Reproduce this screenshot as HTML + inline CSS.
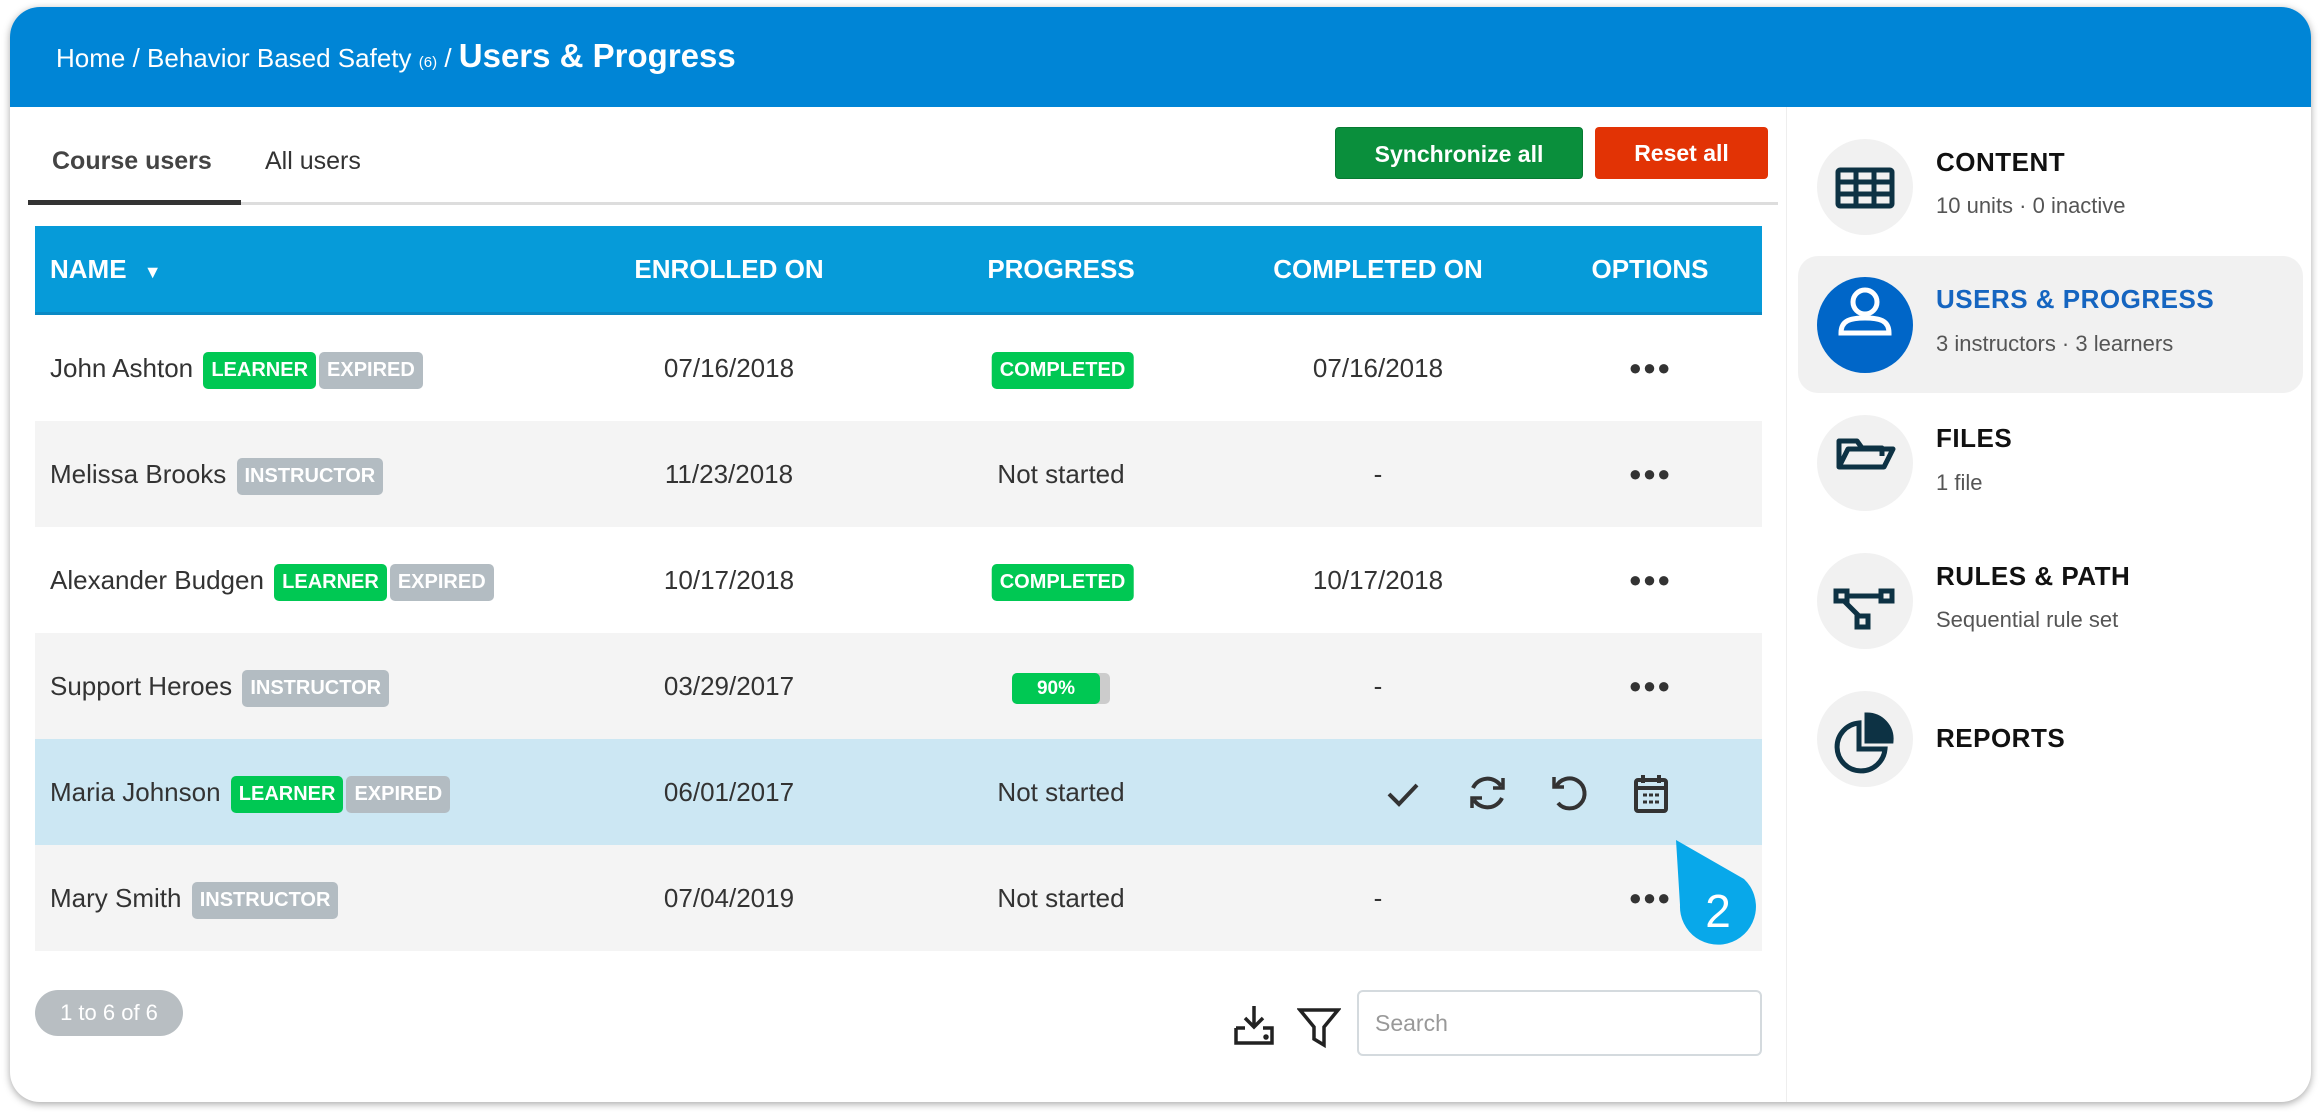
<!DOCTYPE html>
<html><head><meta charset="utf-8"><style>
*{box-sizing:border-box;margin:0;padding:0}
body{width:2320px;height:1112px;background:#fff;font-family:"Liberation Sans",sans-serif;position:relative;overflow:hidden;color:#333}
.card{position:absolute;left:10px;top:7px;width:2301px;height:1095px;border-radius:30px;background:#fff;box-shadow:0 2px 8px rgba(0,0,0,.35);overflow:hidden}
.hdr{position:absolute;left:0;top:0;width:100%;height:100px;background:#0085d6;color:#fff}
.a{position:absolute}
.bc{left:46px;top:30px;font-size:26px;white-space:nowrap}
.bc b{font-size:33px}
.tab{top:140px;font-size:25px}
.btn{top:120px;height:52px;border-radius:4px;color:#fff;font-weight:bold;font-size:23px;text-align:center;line-height:52px}
.th{position:absolute;left:25px;top:219px;width:1727px;height:89px;background:#069bd9;border-bottom:3px solid #0a89c4;color:#fff;font-size:26px;font-weight:bold}
.row{position:absolute;left:25px;width:1727px;height:106px;font-size:26px}
.c{position:absolute;top:0;height:106px;line-height:106px;text-align:center;transform:translateX(-50%);white-space:nowrap}
.nm{position:absolute;left:15px;top:0;line-height:106px;white-space:nowrap}
.bd{display:inline-block;height:37px;line-height:37px;padding:0 8px;border-radius:5px;color:#fff;font-weight:bold;font-size:20px;vertical-align:middle;margin-left:3px}
.l{background:#00c853}.e{background:#b3bcc2}
.dots{font-size:22px;font-weight:bold;letter-spacing:1px}
.side .ci{position:absolute;left:1807px;width:96px;height:96px;border-radius:50%;background:#f1f1f1}
.side .t{position:absolute;left:1926px;font-size:26px;font-weight:bold;color:#111;letter-spacing:.5px}
.side .s{position:absolute;left:1926px;font-size:22px;color:#555}
</style></head><body>
<div class="card">
<div class="hdr"><div class="a bc">Home / Behavior Based Safety <span style="font-size:15px">(6)</span> / <b>Users &amp; Progress</b></div></div>
<div class="a" style="left:1776px;top:100px;width:1px;height:1000px;background:#eee"></div>
<div class="a tab" style="left:42px;font-weight:bold;color:#444">Course users</div>
<div class="a tab" style="left:255px;color:#333">All users</div>
<div class="a" style="left:18px;top:195px;width:1750px;height:3px;background:#ddd"></div>
<div class="a" style="left:18px;top:193px;width:213px;height:5px;background:#333"></div>
<div class="a btn" style="left:1325px;width:248px;background:#0a8f3c;border:1px solid #077a32">Synchronize all</div>
<div class="a btn" style="left:1585px;width:173px;background:#e23305">Reset all</div>
<div class="th">
<div class="a" style="left:15px;top:28px">NAME <span style="font-size:18px;margin-left:10px">▼</span></div>
<div class="c" style="left:694px;line-height:86px">ENROLLED ON</div>
<div class="c" style="left:1026px;line-height:86px">PROGRESS</div>
<div class="c" style="left:1343px;line-height:86px">COMPLETED ON</div>
<div class="c" style="left:1615px;line-height:86px">OPTIONS</div>
</div>
<div class="row" style="top:308px;background:#fff"><div class="nm">John Ashton <span class="bd l">LEARNER</span><span class="bd e">EXPIRED</span></div><div class="c" style="left:694px">07/16/2018</div><div class="c" style="left:1026px"><span class="bd l">COMPLETED</span></div><div class="c" style="left:1343px">07/16/2018</div><div class="c dots" style="left:1615px">●●●</div></div>
<div class="row" style="top:414px;background:#f4f4f4"><div class="nm">Melissa Brooks <span class="bd e">INSTRUCTOR</span></div><div class="c" style="left:694px">11/23/2018</div><div class="c" style="left:1026px">Not started</div><div class="c" style="left:1343px">-</div><div class="c dots" style="left:1615px">●●●</div></div>
<div class="row" style="top:520px;background:#fff"><div class="nm">Alexander Budgen <span class="bd l">LEARNER</span><span class="bd e">EXPIRED</span></div><div class="c" style="left:694px">10/17/2018</div><div class="c" style="left:1026px"><span class="bd l">COMPLETED</span></div><div class="c" style="left:1343px">10/17/2018</div><div class="c dots" style="left:1615px">●●●</div></div>
<div class="row" style="top:626px;background:#f4f4f4"><div class="nm">Support Heroes <span class="bd e">INSTRUCTOR</span></div><div class="c" style="left:694px">03/29/2017</div><div class="c" style="left:1026px"><span style="display:inline-block;vertical-align:middle;width:98px;height:31px;background:#ccc;border-radius:5px;position:relative"><span style="position:absolute;left:0;top:0;width:88px;height:31px;background:#00c853;border-radius:5px;color:#fff;font-weight:bold;font-size:19px;line-height:31px;text-align:center">90%</span></span></div><div class="c" style="left:1343px">-</div><div class="c dots" style="left:1615px">●●●</div></div>
<div class="row" style="top:732px;background:#cce7f3"><div class="nm">Maria Johnson <span class="bd l">LEARNER</span><span class="bd e">EXPIRED</span></div><div class="c" style="left:694px">06/01/2017</div><div class="c" style="left:1026px">Not started</div>
<svg class="a" style="left:1340px;top:33px" width="300" height="42" viewBox="0 0 300 42" fill="none" stroke="#333" stroke-width="4">
<path d="M14 22l10 10 18-19"/>
<path d="M98 16a16 16 0 0 1 28-2M127 26a16 16 0 0 1-28 2"/><path d="M128 6v10h-10M97 36V26h10" stroke-width="3.5"/>
<path d="M181 15a15 15 0 1 1 2 16"/><path d="M179 5v10h10" stroke-width="3.5"/>
<rect x="261" y="8" width="30" height="31" rx="2"/><path d="M261 16h30M268 3v8M284 3v8"/><path d="M268 23h4M274 23h4M280 23h4M268 30h4M274 30h4M280 30h4" stroke-width="3"/>
</svg></div>
<div class="row" style="top:838px;background:#f4f4f4"><div class="nm">Mary Smith <span class="bd e">INSTRUCTOR</span></div><div class="c" style="left:694px">07/04/2019</div><div class="c" style="left:1026px">Not started</div><div class="c" style="left:1343px">-</div><div class="c dots" style="left:1615px">●●●</div></div>
<svg class="a" style="left:1630px;top:820px" width="130" height="120" viewBox="0 0 130 120"><path d="M36 13 L104 52 A38 38 0 1 1 40 78 Z" fill="#08a8ea"/><text x="78" y="100" fill="#fff" font-size="46" font-family="Liberation Sans" text-anchor="middle">2</text></svg>
<div class="a" style="left:25px;top:983px;width:148px;height:46px;border-radius:23px;background:#b8bec2;color:#fff;font-size:22px;line-height:46px;text-align:center">1 to 6 of 6</div>
<svg class="a" style="left:1222px;top:996px" width="44" height="44" viewBox="0 0 44 44" fill="none" stroke="#222" stroke-width="3.5">
<path d="M22 3v20M13 15l9 9 9-9M4 25v15h36V25H31M13 25H4"/><circle cx="34" cy="34" r="1" fill="#222"/></svg>
<svg class="a" style="left:1287px;top:998px" width="44" height="44" viewBox="0 0 44 44" fill="none" stroke="#222" stroke-width="3.5">
<path d="M3 5h38L27 22v18l-10-6V22z"/></svg>
<div class="a" style="left:1347px;top:983px;width:405px;height:66px;border:2px solid #d4dade;border-radius:6px;font-size:23px;color:#999;line-height:62px;padding-left:16px">Search</div>
<div class="side">
<div class="a" style="left:1788px;top:249px;width:505px;height:137px;border-radius:20px;background:#f1f1f1"></div>
<div class="ci" style="top:132px"></div><div class="t" style="top:140px">CONTENT</div><div class="s" style="top:186px">10 units · 0 inactive</div>
<div class="ci" style="top:270px;background:#0066c8"></div><div class="t" style="top:277px;color:#1565c0">USERS &amp; PROGRESS</div><div class="s" style="top:324px">3 instructors · 3 learners</div>
<div class="ci" style="top:408px"></div><div class="t" style="top:416px">FILES</div><div class="s" style="top:463px">1 file</div>
<div class="ci" style="top:546px"></div><div class="t" style="top:554px">RULES &amp; PATH</div><div class="s" style="top:600px">Sequential rule set</div>
<div class="ci" style="top:684px"></div><div class="t" style="top:716px">REPORTS</div>
<svg class="a" style="left:1807px;top:132px" width="96" height="660" viewBox="0 0 96 660" fill="none" stroke="#0d3244" stroke-width="5">
<rect x="21" y="31" width="54" height="36" rx="2"/><path d="M21 43h54M21 55h54M39 31v36M57 31v36"/>
<g stroke="#fff"><circle cx="48" cy="163" r="12"/><path d="M24 194c0-13 10-15 24-15s24 2 24 15z"/></g>
<path d="M22 328v-26h18l5 7h20v8M22 328l9-18h45l-9 18z" stroke-linejoin="round"/>
<rect x="19" y="452" width="11" height="10"/><rect x="64" y="452" width="11" height="10"/><rect x="40" y="477" width="11" height="11"/><path d="M30 457h34M27 462l15 15"/>
<path d="M42 584a24 24 0 1 0 26 26H42z"/><path d="M50 576a24 24 0 0 1 24 26H50z" fill="#0d3244"/>
</svg>
</div>
</div>
</body></html>
